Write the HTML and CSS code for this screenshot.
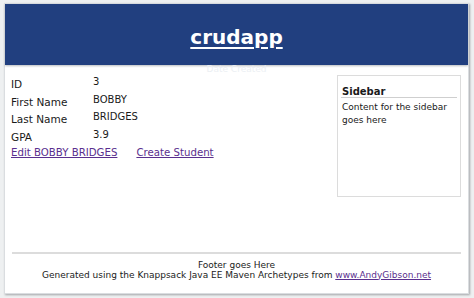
FILE: index.html
```html
<!DOCTYPE html>
<html>
<head>
<meta charset="utf-8">
<title>crudapp</title>
<link rel="stylesheet" href="styles.css">
</head>
<body>
<div class="page">
  <div class="header"><a class="title" href="#">crudapp</a></div>
  <div class="sub">Date Created</div>
  <div class="main">
    <div class="content">
      <table class="details">
        <tr><td class="label">ID</td><td class="value">3</td></tr>
        <tr><td class="label">First Name</td><td class="value">BOBBY</td></tr>
        <tr><td class="label">Last Name</td><td class="value">BRIDGES</td></tr>
        <tr><td class="label">GPA</td><td class="value">3.9</td></tr>
      </table>
      <div class="links">
        <a href="#">Edit BOBBY BRIDGES</a>
        <a href="#">Create Student</a>
      </div>
    </div>
    <div class="sidebar">
      <div class="side-title">Sidebar</div>
      <div class="side-text">Content for the sidebar goes here</div>
    </div>
  </div>
  <div class="footer">
    <div class="foot-line">Footer goes Here</div>
    <div class="foot-line">Generated using the Knappsack Java EE Maven Archetypes from <a href="#">www.AndyGibson.net</a></div>
  </div>
</div>
</body>
</html>
```

FILE: styles.css
```css
html, body {
  margin: 0;
  padding: 0;
}
body {
  background: #eef0f1;
  font-family: "DejaVu Sans", Verdana, sans-serif;
  color: #1a1a1a;
  width: 474px;
  height: 298px;
  overflow: hidden;
}
.page {
  margin: 4px 0 0 5px;
  width: 463px;
  height: 289px;
  background: #ffffff;
  box-shadow: 0 0 0 1px #dadde0, 1px 1px 2px 1px #a3a6a9;
  display: flex;
  flex-direction: column;
}
.header {
  height: 61px;
  flex: none;
  background: #213f7f;
  display: flex;
  align-items: center;
  justify-content: center;
  padding-top: 5px;
  box-sizing: border-box;
  box-shadow: 0 1px 2px #b9bcbf;
}
.title {
  color: #ffffff;
  font-weight: bold;
  font-size: 20px;
  text-decoration: underline;
  text-underline-offset: 3px;
  text-decoration-thickness: 2px;
}
.sub {
  height: 10px;
  flex: none;
  font-size: 9px;
  line-height: 8px;
  text-align: center;
  color: #eceff3;
}
.main {
  flex: 1;
  display: flex;
  padding: 0 7px 0 6px;
}
.content {
  flex: 1;
  padding-top: 1px;
}
.details {
  border-collapse: collapse;
}
.details td {
  padding: 0;
}
.label {
  width: 82px;
  font-size: 10.5px;
  line-height: 17.5px;
  vertical-align: top;
}
.value {
  font-size: 10px;
  line-height: 12px;
  vertical-align: top;
}
.links {
  display: flex;
  gap: 19px;
  font-size: 10.2px;
  line-height: 13px;
}
.links a, .footer a {
  color: #5a2f8e;
  text-decoration: underline;
}
.sidebar {
  width: 124px;
  height: 122px;
  box-sizing: border-box;
  border: 1px solid #dcdcdc;
  padding: 10px 3px 0 3px;
}
.side-title {
  font-weight: bold;
  font-size: 10px;
  line-height: 11px;
  border-bottom: 1px solid #cfcfcf;
  padding-left: 1px;
}
.side-text {
  margin-top: 3px;
  font-size: 9px;
  line-height: 13px;
  padding-left: 1px;
}
.footer {
  flex: none;
  margin: 0 7px;
  border-top: 2px solid #dcdcdc;
  padding: 7px 0 13px 0;
  text-align: center;
  font-size: 9px;
  line-height: 9.5px;
}
```
